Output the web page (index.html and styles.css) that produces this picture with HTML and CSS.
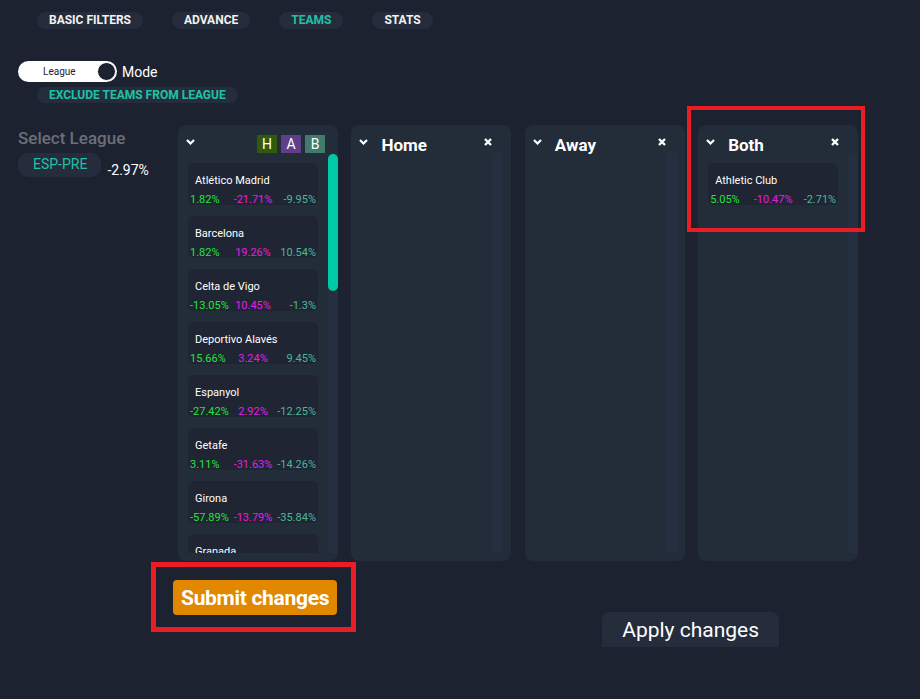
FILE: index.html
```html
<!DOCTYPE html>
<html lang="en">
<head>
    <meta charset="UTF-8">
    <meta name="viewport" content="width=device-width, initial-scale=1.0">
    <title>Teams</title>
    <link rel="stylesheet" href="styles.css">
</head>
<body>
    <div class="tabs">
        <button class="tab">BASIC FILTERS</button>
        <button class="tab">ADVANCE</button>
        <button class="tab active">TEAMS</button>
        <button class="tab">STATS</button>
    </div>

    <div class="mode-row">
        <div class="toggle">
            <span class="toggle-label">League</span>
            <span class="toggle-knob"></span>
        </div>
        <span class="mode-text">Mode</span>
    </div>
    <div class="exclude">EXCLUDE TEAMS FROM LEAGUE</div>

    <div class="main">
        <div class="league-col">
            <div class="select-title">Select League</div>
            <div class="league-row">
                <span class="league-pill">ESP-PRE</span>
                <span class="league-value">-2.97%</span>
            </div>
        </div>

        <div class="boards">
            <div class="panel">
                <div class="panel-head">
                    <svg class="chevron" width="9" height="6" viewBox="0 0 9 6"><polyline points="1,1 4.5,4.5 8,1" fill="none" stroke="#fff" stroke-width="2.2"/></svg>
                    <div class="badges">
                        <span class="badge badge-h">H</span>
                        <span class="badge badge-a">A</span>
                        <span class="badge badge-b">B</span>
                    </div>
                </div>
                <div class="panel-body">
                    <div class="list">
                        <div class="card"><div class="team">Atlético Madrid</div><div class="pcts"><span class="p1">1.82%</span><span class="p2">-21.71%</span><span class="p3">-9.95%</span></div></div>
                        <div class="card"><div class="team">Barcelona</div><div class="pcts"><span class="p1">1.82%</span><span class="p2">19.26%</span><span class="p3">10.54%</span></div></div>
                        <div class="card"><div class="team">Celta de Vigo</div><div class="pcts"><span class="p1">-13.05%</span><span class="p2">10.45%</span><span class="p3">-1.3%</span></div></div>
                        <div class="card"><div class="team">Deportivo Alavés</div><div class="pcts"><span class="p1">15.66%</span><span class="p2">3.24%</span><span class="p3">9.45%</span></div></div>
                        <div class="card"><div class="team">Espanyol</div><div class="pcts"><span class="p1">-27.42%</span><span class="p2">2.92%</span><span class="p3">-12.25%</span></div></div>
                        <div class="card"><div class="team">Getafe</div><div class="pcts"><span class="p1">3.11%</span><span class="p2">-31.63%</span><span class="p3">-14.26%</span></div></div>
                        <div class="card"><div class="team">Girona</div><div class="pcts"><span class="p1">-57.89%</span><span class="p2">-13.79%</span><span class="p3">-35.84%</span></div></div>
                        <div class="card"><div class="team">Granada</div><div class="pcts"><span class="p1">4.02%</span><span class="p2">-8.11%</span><span class="p3">-2.05%</span></div></div>
                    </div>
                    <div class="track"><div class="thumb"></div></div>
                </div>
            </div>

            <div class="panel">
                <div class="panel-head">
                    <svg class="chevron" width="9" height="6" viewBox="0 0 9 6"><polyline points="1,1 4.5,4.5 8,1" fill="none" stroke="#fff" stroke-width="2.2"/></svg>
                    <span class="panel-title">Home</span>
                    <svg class="close" width="8" height="8" viewBox="0 0 8 8"><path d="M1 1L7 7M7 1L1 7" stroke="#fff" stroke-width="2.4"/></svg>
                </div>
                <div class="panel-body">
                    <div class="list"></div>
                    <div class="track track-inset"></div>
                </div>
            </div>

            <div class="panel">
                <div class="panel-head">
                    <svg class="chevron" width="9" height="6" viewBox="0 0 9 6"><polyline points="1,1 4.5,4.5 8,1" fill="none" stroke="#fff" stroke-width="2.2"/></svg>
                    <span class="panel-title">Away</span>
                    <svg class="close" width="8" height="8" viewBox="0 0 8 8"><path d="M1 1L7 7M7 1L1 7" stroke="#fff" stroke-width="2.4"/></svg>
                </div>
                <div class="panel-body">
                    <div class="list"></div>
                    <div class="track track-inset"></div>
                </div>
            </div>

            <div class="panel">
                <div class="panel-head">
                    <svg class="chevron" width="9" height="6" viewBox="0 0 9 6"><polyline points="1,1 4.5,4.5 8,1" fill="none" stroke="#fff" stroke-width="2.2"/></svg>
                    <span class="panel-title">Both</span>
                    <svg class="close" width="8" height="8" viewBox="0 0 8 8"><path d="M1 1L7 7M7 1L1 7" stroke="#fff" stroke-width="2.4"/></svg>
                </div>
                <div class="panel-body">
                    <div class="list">
                        <div class="card"><div class="team">Athletic Club</div><div class="pcts"><span class="p1">5.05%</span><span class="p2">-10.47%</span><span class="p3">-2.71%</span></div></div>
                    </div>
                    <div class="track"></div>
                </div>
            </div>
        </div>
    </div>

    <div class="actions">
        <button class="submit">Submit changes</button>
        <button class="apply">Apply changes</button>
    </div>

    <!-- annotation boxes -->
    <div class="mark mark-both"></div>
    <div class="mark mark-submit"></div>
</body>
</html>
```

FILE: styles.css
```css
body {
    margin: 0;
    padding: 12px 0 0 0;
    background-color: #1d2230;
    font-family: Roboto, "Liberation Sans", sans-serif;
    color: #fff;
    height: 687px;
    overflow: hidden;
}

button {
    font-family: inherit;
    border: none;
    cursor: pointer;
}

.tabs {
    display: flex;
    gap: 29px;
    padding-left: 37px;
}

.tab {
    background-color: #252d3c;
    color: #f2f2f2;
    font-size: 12px;
    font-weight: 700;
    height: 17px;
    line-height: 17px;
    padding: 0 12px;
    border-radius: 9px;
}

.tab.active {
    color: #1fc2a6;
}

.mode-row {
    display: flex;
    align-items: center;
    margin-top: 32px;
    padding-left: 18px;
}

.toggle {
    width: 99px;
    height: 21px;
    box-sizing: border-box;
    background-color: #fff;
    border-radius: 11px;
    display: flex;
    align-items: center;
    justify-content: space-between;
    padding: 0 1px 0 25px;
}

.toggle-label {
    color: #1d2230;
    font-size: 10px;
}

.toggle-knob {
    width: 17px;
    height: 17px;
    border-radius: 50%;
    background-color: #1d2230;
    border: 1px solid #fff;
}

.mode-text {
    font-size: 14px;
    margin-left: 5px;
}

.exclude {
    display: inline-block;
    margin: 5px 0 0 37px;
    background-color: #252d3c;
    color: #1fc2a6;
    font-size: 12px;
    font-weight: 700;
    height: 16px;
    line-height: 16px;
    padding: 0 12px;
    border-radius: 8px;
}

.main {
    display: flex;
    margin-top: 22px;
    padding-left: 18px;
}

.league-col {
    width: 160px;
}

.select-title {
    color: #6b6f78;
    font-size: 17px;
    font-weight: 500;
    line-height: 20px;
    margin-top: 3px;
}

.league-row {
    display: flex;
    align-items: flex-end;
    margin-top: 5px;
}

.league-pill {
    background-color: #252d3c;
    color: #1fc2a6;
    font-size: 14px;
    height: 24px;
    line-height: 22px;
    padding: 0 14px 0 15px;
    border-radius: 10px;
}

.league-value {
    font-size: 14px;
    margin-left: 6px;
    line-height: 14px;
}

.boards {
    display: flex;
    gap: 13.4px;
}

.panel {
    width: 160px;
    height: 436px;
    background-color: #232c39;
    border-radius: 8px;
    display: flex;
    flex-direction: column;
}

.panel-head {
    height: 28px;
    display: flex;
    align-items: center;
    padding-left: 8px;
}

.chevron {
    margin-top: 5px;
}

.panel-title {
    font-size: 17px;
    font-weight: 700;
    margin-left: 13px;
    margin-top: 11px;
}

.close {
    margin-left: auto;
    margin-right: 19px;
    margin-top: 5px;
}

.badges {
    display: flex;
    gap: 4px;
    margin-left: auto;
    margin-right: 13px;
    margin-top: 10px;
}

.badge {
    width: 20px;
    height: 18px;
    line-height: 18px;
    text-align: center;
    font-size: 14px;
}

.badge-h { background-color: #2f5b0b; }
.badge-a { background-color: #5f4088; }
.badge-b { background-color: #3f7c6d; }

.panel-body {
    display: flex;
    height: 400px;
    padding-left: 10px;
}

.list {
    width: 130px;
    overflow: hidden;
    padding-top: 10px;
    display: flex;
    flex-direction: column;
    gap: 11px;
}

.card {
    flex-shrink: 0;
    height: 42px;
    background-color: #1f2532;
    border-radius: 6px;
    padding: 11px 2px 0 2px;
    box-sizing: border-box;
    font-size: 11px;
}

.team {
    line-height: 14px;
    padding-left: 5px;
}

.pcts {
    display: grid;
    grid-template-columns: 1fr 1fr 1fr;
    line-height: 14px;
    margin-top: 5px;
}

.p1 { color: #22e43a; text-align: left; }
.p2 { color: #e41ee4; text-align: center; white-space: nowrap; }
.p3 { color: #4cb897; text-align: right; }

.track {
    width: 10px;
    margin-left: 10px;
    background-color: #262f40;
}

.track-inset {
    width: 11px;
    margin-left: 1px;
}

.thumb {
    height: 137px;
    margin-top: 1px;
    background-color: #00c9a8;
    border-radius: 5px;
}

.actions {
    display: flex;
    align-items: flex-start;
    padding-left: 173px;
    margin-top: 19px;
}

.submit {
    background-color: #e28700;
    color: #fff;
    font-size: 21px;
    font-weight: 700;
    height: 35px;
    padding: 0 8px;
    border-radius: 4px;
    letter-spacing: -0.3px;
}

.apply {
    margin-left: 265px;
    margin-top: 32px;
    background-color: #252d3c;
    color: #fff;
    font-size: 21px;
    height: 35px;
    padding: 0 20px;
    border-radius: 8px 8px 0 0;
}

.mark {
    position: absolute;
    border: 4px solid #ec1c24;
    box-sizing: border-box;
}

.mark-both {
    left: 687px;
    top: 106px;
    width: 178px;
    height: 126px;
}

.mark-submit {
    left: 151px;
    top: 562px;
    width: 205px;
    height: 70px;
    border-width: 5px;
}
```
